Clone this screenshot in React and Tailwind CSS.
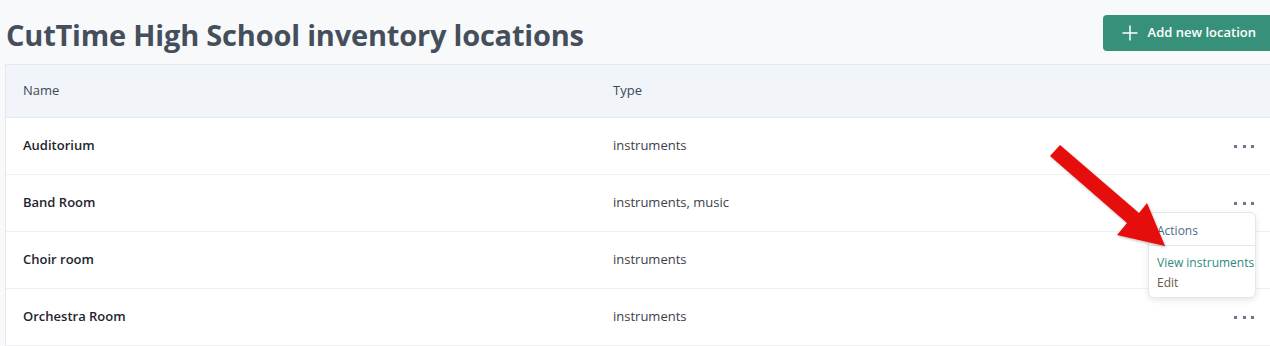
const rows = [
  { name: 'Auditorium', type: 'instruments' },
  { name: 'Band Room', type: 'instruments, music', open: true },
  { name: 'Choir room', type: 'instruments' },
  { name: 'Orchestra Room', type: 'instruments' },
]

function Dots() {
  return (
    <div className="flex items-center gap-[5.5px]">
      <span className="w-[3px] h-[3px] bg-[#6b7688]" />
      <span className="w-[3px] h-[3px] bg-[#6b7688]" />
      <span className="w-[3px] h-[3px] bg-[#6b7688]" />
    </div>
  )
}

function ActionsMenu() {
  return (
    <div className="absolute right-[-2px] top-[10px] w-[108px] h-[86px] bg-white border border-[#e3e7ee] rounded-[6px] shadow-[0_2px_6px_rgba(0,0,0,0.10)] z-10 text-[12px]">
      <div className="pl-[8px] pt-[9px] pb-[5px] text-[#4c6a8c]">Actions</div>
      <div className="border-t border-[#e3e7ee]" />
      <div className="pl-[8px] pt-[8px] leading-[18px] text-[#2f8a80]">View instruments</div>
      <div className="pl-[8px] pt-[2px] leading-[18px] text-[#6a5a48]">Edit</div>
    </div>
  )
}

export default function App() {
  return (
    <div className="relative w-[1270px] h-[346px] overflow-hidden bg-[#f8f9fb] font-['Open_Sans','Noto_Sans',sans-serif]">
      <div className="w-[1285px] pl-[5px]">
        {/* Header */}
        <div className="flex items-center justify-between h-[64px]">
          <h1 className="text-[29px] font-bold text-[#454f5c] tracking-[-0.2px] pl-[1px] pt-[6px]">
            CutTime High School inventory locations
          </h1>
          <button className="flex items-center gap-[10px] h-[36px] mt-[2px] pl-[19px] pr-[29px] bg-[#37917a] rounded-[4px] text-white text-[13px] font-semibold">
            <svg width="16" height="16" viewBox="0 0 16 16" fill="none" stroke="currentColor" strokeWidth="1.5">
              <path d="M8 0.5v15M0.5 8h15" />
            </svg>
            Add new location
          </button>
        </div>

        {/* Table */}
        <div className="bg-white border-l border-t border-[#e3e8ef]">
          <div className="flex items-center h-[53px] bg-[#f1f4f8] border-b border-[#e6e9ee] px-[17px] text-[13px] text-[#3c4858]">
            <div className="w-[590px]">Name</div>
            <div>Type</div>
          </div>
          {rows.map((row) => (
            <div key={row.name} className="flex items-center h-[57px] border-b border-[#eef0f3] px-[17px] text-[13px]">
              <div className="w-[590px] font-semibold text-[#1f2530]">{row.name}</div>
              <div className="flex-1 text-[#3a414b]">{row.type}</div>
              <div className="relative mr-[14px]">
                <Dots />
                {row.open && <ActionsMenu />}
              </div>
            </div>
          ))}
        </div>
      </div>

      {/* Annotation arrow */}
      <svg className="absolute left-0 top-0 pointer-events-none z-20" width="1270" height="346">
        <defs>
          <filter id="sh" x="-10%" y="-10%" width="130%" height="130%">
            <feDropShadow dx="1" dy="1.5" stdDeviation="1.2" floodColor="#000" floodOpacity="0.25" />
          </filter>
        </defs>
        <polygon
          points="1060,145 1139,213 1147,203 1165,246 1117,235 1127,223 1050,156"
          fill="#e60a0a"
          filter="url(#sh)"
        />
      </svg>
    </div>
  )
}
